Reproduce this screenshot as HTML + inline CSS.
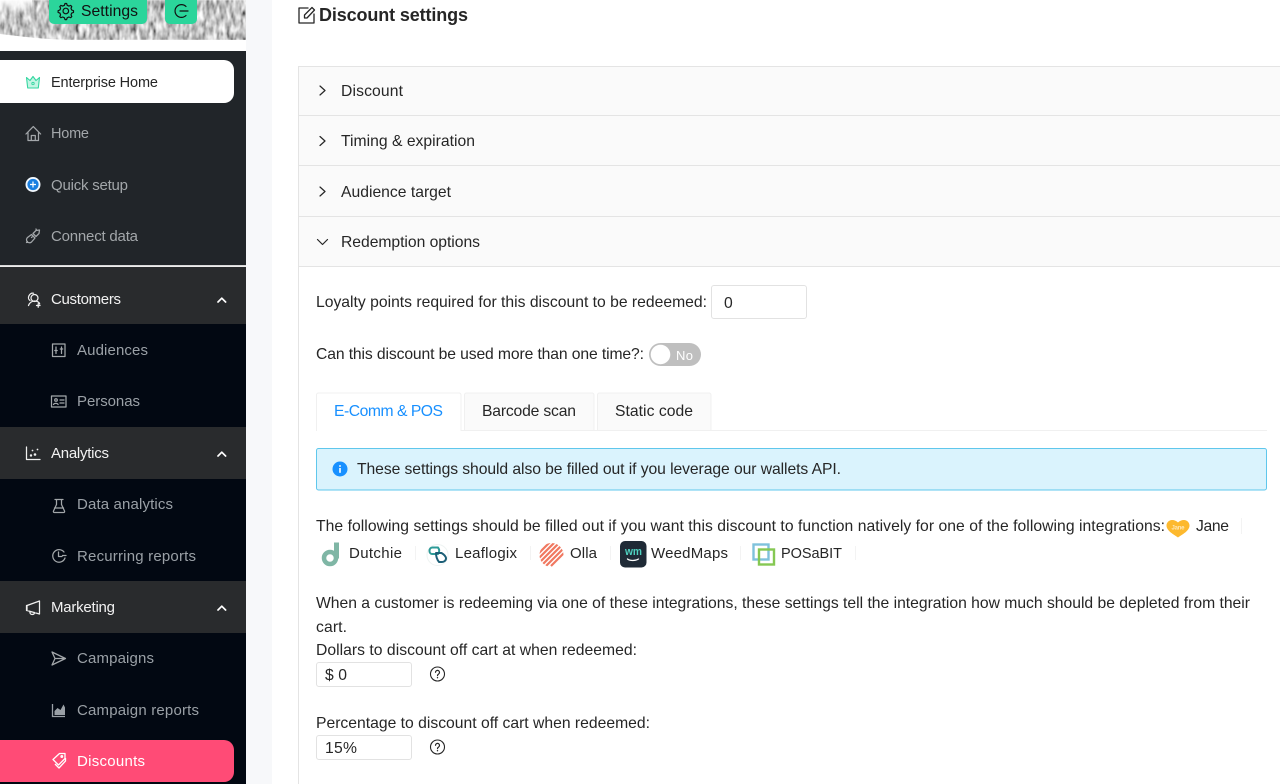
<!DOCTYPE html>
<html><head><meta charset="utf-8"><title>Discount settings</title>
<style>
html,body{margin:0;padding:0;background:#fff;width:1280px;height:784px;overflow:hidden}
svg{display:block}
text{font-family:"Liberation Sans",sans-serif;font-size:15.700px;fill:#262626}
.t{font-size:15px}
.n{font-size:15px}
.m{fill:#a3a7aa}.s{fill:#9aa0a6}.w{fill:#f2f2f2}
.i{fill:none;stroke:#a3a7aa;stroke-width:1.250;stroke-linecap:round;stroke-linejoin:round}
.iw{fill:none;stroke:#f0f0f0;stroke-width:1.250;stroke-linecap:round;stroke-linejoin:round}
.k{fill:none;stroke:#262626;stroke-width:1.200;stroke-linecap:round;stroke-linejoin:round}
</style></head><body>
<svg width="1280" height="784" viewBox="0 0 1280 784" xmlns="http://www.w3.org/2000/svg">
<defs>
<filter id="snow" x="0" y="0" width="100%" height="100%">
<feTurbulence type="fractalNoise" baseFrequency="0.3 0.09" numOctaves="3" seed="11"/>
<feColorMatrix type="matrix" values="1.150 1.150 0 0 -0.600  1.150 1.150 0 0 -0.600  1.150 1.150 0 0 -0.600  0 0 0 0 1"/>
<feGaussianBlur stdDeviation=".4"/>
</filter>
<linearGradient id="sky" x1="0" x2="0" y1="0" y2="1"><stop offset="0" stop-color="#fff" stop-opacity=".95"/><stop offset="1" stop-color="#fff" stop-opacity="0"/></linearGradient>
<clipPath id="ollaClip"><circle cx="551.500" cy="555" r="12"/></clipPath>
</defs>
<rect width="1280" height="784" fill="#fff"/>
<rect x="246" width="26" height="784" fill="#f7f8fa"/>

<!-- banner -->
<rect width="246" height="40" filter="url(#snow)"/>
<path d="M0 0H32V14H0Z" fill="url(#sky)"/>
<path d="M0 34C18 36 40 39 70 40H0Z" fill="#fff"/>
<rect y="40" width="246" height="10.500" fill="#fff"/>
<path d="M49 0H147V19a5 5 0 0 1-5 5H54a5 5 0 0 1-5-5Z" fill="#2bd59b"/>
<path d="M165 0H197V19a5 5 0 0 1-5 5H170a5 5 0 0 1-5-5Z" fill="#2bd59b"/>
<g fill="none" stroke="#111" stroke-width="1.200" stroke-linejoin="round">
<path d="M65 3.500l1.600 0 .6 1.800 1.700.8 1.800-.7 1.100 1.200-.8 1.700.7 1.700 1.800.7v1.700l-1.800.7-.7 1.700.8 1.700-1.100 1.200-1.800-.7-1.700.8-.6 1.800h-1.600l-.6-1.800-1.700-.8-1.800.7-1.100-1.200.8-1.700-.7-1.700-1.800-.7v-1.700l1.800-.7.7-1.700-.8-1.700 1.100-1.200 1.800.7 1.700-.8Z"/>
<circle cx="65.800" cy="11" r="2.800"/>
<path d="M186 6.500a6.400 6.400 0 1 0 0 9M180 11H188" stroke-linecap="round"/>
</g>
<text x="81" y="16" textLength="57" style="fill:#111">Settings</text>

<!-- sidebar -->
<rect y="51" width="246" height="215" fill="#212529"/>
<rect y="265" width="246" height="1.500" fill="#d8d8d8"/>
<rect y="267" width="246" height="517" fill="#020812"/>
<rect y="267" width="246" height="57" fill="#292b2d"/>
<rect y="427" width="246" height="52" fill="#292b2d"/>
<rect y="581" width="246" height="52" fill="#292b2d"/>

<path d="M0 60H224a10 10 0 0 1 10 10V93a10 10 0 0 1-10 10H0Z" fill="#fff"/>
<path d="M0 740H224a10 10 0 0 1 10 10V772a10 10 0 0 1-10 10H0Z" fill="#ff4b76"/>

<text x="51" y="87" textLength="107" style="font-size:14.500px">Enterprise Home</text>
<text class="t m" x="51" y="138" textLength="38" style="font-size:14.500px">Home</text>
<text class="t m" x="51" y="190" textLength="77">Quick setup</text>
<text class="t m" x="51" y="241" textLength="87">Connect data</text>
<text class="t w" x="51" y="304" textLength="70">Customers</text>
<text class="t s" x="77" y="355" textLength="71">Audiences</text>
<text class="t s" x="77" y="406" textLength="63">Personas</text>
<text class="t w" x="51" y="458" textLength="58">Analytics</text>
<text class="t s" x="77" y="509" textLength="96">Data analytics</text>
<text class="t s" x="77" y="561" textLength="119">Recurring reports</text>
<text class="t w" x="51" y="612" textLength="64">Marketing</text>
<text class="t s" x="77" y="663" textLength="77">Campaigns</text>
<text class="t s" x="77" y="715" textLength="122">Campaign reports</text>
<text class="t" x="77" y="766" textLength="68" style="fill:#fff">Discounts</text>

<!-- sidebar icons -->
<path d="M26.500 77.500l3.500 3 3-4 3 4 3.500-3-1.200 10.500h-10.600Z" fill="#c4f5e4" stroke="#33d6a0" stroke-width="1.100" stroke-linejoin="round"/>
<circle cx="33" cy="83.500" r="1.200" fill="none" stroke="#33d6a0" stroke-width=".9"/>
<path class="i" d="M26 134l7.300-7.500 7.300 7.500M28 132.500V140.500h10.500V132.500M31.300 140.500v-5h4v5"/>
<circle cx="33" cy="184.500" r="7.500" fill="#f2f8fd"/><circle cx="33" cy="184.500" r="5.600" fill="#1a7fe0"/>
<path d="M33 181.500v6M30 184.500h6" stroke="#fff" stroke-width="1.200"/>
<path class="i" d="M27.500 237.500l4-3 3.500 3.500-3.500 4a2.500 2.500 0 0 1-4-4.500ZM33 233.500l3-3 3.500-.5-.5 3.500-3 3ZM36.500 230.500l-.5-1.500M27.500 241.500l-1 1M33 236l-1.500 1.500"/>
<g class="iw"><circle cx="34.500" cy="298" r="3.500"/><path d="M28.500 305.500c.8-2.500 3.200-4.500 6-4.500s4.500 1 5.200 3M30 300.500c-1.500-1-2-3-1-4.800s2.500-3 4.500-2.500M36.500 305.500h3.500M38.200 303.800v3.500"/></g>
<g class="i"><rect x="52.500" y="344" width="12.500" height="12.500"/><path d="M56 347v6.500M61.500 347v6.500M54.800 350.500h2.400M60.300 349h2.400"/></g>
<g class="i"><rect x="51.500" y="396" width="14.500" height="11"/><circle cx="56" cy="400" r="1.300"/><path d="M53.500 404.500c.6-1.500 4-1.500 4.600 0M60 400h4M60 403h4"/></g>
<g class="iw"><path d="M26.500 447v12.500H40"/></g>
<g fill="#f0f0f0"><circle cx="31" cy="455.500" r="1.200"/><circle cx="35" cy="454.500" r="1.300"/><circle cx="32.500" cy="450.500" r=".9"/><circle cx="37.500" cy="449.500" r=".9"/></g>
<g class="i"><path d="M55 499.500h8M56.500 500v4.500l-3 6.500c-.3.700 0 1.500 1 1.500h9c1 0 1.300-.8 1-1.500l-3-6.500v-4.500M54.500 508h9"/></g>
<g class="i"><path d="M64 552a6.300 6.300 0 1 0 1 6M58.500 552v4.500h3.500M62.500 555.500h3.500"/></g>
<g class="iw"><path d="M39.500 601L27 605.500v5L39.500 614ZM27 605.500h-.500v5h.5M30 611.500c-.5 1.500.5 3 2 3s2.500-.8 2.500-2"/></g>
<path class="i" d="M52 652l13.500 6.500L52 665l3-6.500ZM55 658.500h10.500"/>
<path d="M52.500 704v12.500H65" fill="none" stroke="#9aa0a6" stroke-width="1.300"/><path d="M54.500 715v-4l3-3 3 2 3-5.500 1.500 3V715Z" fill="#9aa0a6"/>
<g fill="none" stroke="#fff" stroke-width="1.300" stroke-linejoin="round"><path d="M53 759.500l6.500-6h5.500v5l-6.500 6.500Z"/><path d="M65.500 758v3l-6.500 7-4-4"/><circle cx="61.800" cy="756.500" r=".8"/></g>
<g fill="none" stroke="#fff" stroke-width="1.700" stroke-linecap="round" stroke-linejoin="round"><path d="M218 302l3.800-3.800 3.800 3.800M218 456l3.800-3.800 3.800 3.800M218 610l3.800-3.800 3.800 3.800"/></g>

<!-- title -->
<g fill="none" stroke="#262626" stroke-width="1.300" stroke-linecap="round" stroke-linejoin="round"><path d="M308 8h-9v15h15v-9"/><path d="M304.500 18v-3l7.500-7.500 2.500 2.500-7.500 8Z"/></g>
<text x="319" y="21" textLength="149" style="font-size:18px;font-weight:700">Discount settings</text>

<!-- accordion -->
<rect x="299" y="67" width="981" height="200" fill="#fafafa"/>
<g fill="#e4e4e4"><rect x="298" y="66" width="982" height="1"/><rect x="298" y="115" width="982" height="1"/><rect x="298" y="165" width="982" height="1"/><rect x="298" y="216" width="982" height="1"/><rect x="298" y="266" width="982" height="1"/><rect x="298" y="66" width="1" height="718"/></g>
<path class="k" d="M320 86l5 4.500-5 4.500M320 136.500l5 4.500-5 4.500M320 187l5 4.500-5 4.500M317.500 239.500l5 5 5-5"/>
<text x="341" y="96" textLength="62">Discount</text>
<text x="341" y="146" textLength="134">Timing &amp; expiration</text>
<text x="341" y="197" textLength="110">Audience target</text>
<text x="341" y="247" textLength="139">Redemption options</text>

<!-- loyalty -->
<text x="316" y="307" textLength="391">Loyalty points required for this discount to be redeemed:</text>
<rect x="711.500" y="285.500" width="95" height="33" rx="2.500" fill="#fff" stroke="#e2e2e2"/>
<text x="724" y="308" textLength="9">0</text>

<text x="316" y="359" textLength="328">Can this discount be used more than one time?:</text>
<rect x="649" y="343" width="52" height="23" rx="11.500" fill="#bfbfbf"/>
<circle cx="660.500" cy="354.500" r="9.800" fill="#fff"/>
<text x="676" y="360" textLength="17" style="font-size:13px;fill:#fff">No</text>

<!-- tabs -->
<path d="M464.500 430V395a2 2 0 0 1 2-2H592a2 2 0 0 1 2 2V430" fill="#fafafa" stroke="#f0f0f0"/>
<path d="M597.500 430V395a2 2 0 0 1 2-2H709a2 2 0 0 1 2 2V430" fill="#fafafa" stroke="#f0f0f0"/>
<rect x="316" y="430" width="951" height="1" fill="#f0f0f0"/>
<path d="M316.500 431V395a2 2 0 0 1 2-2H459a2 2 0 0 1 2 2V431" fill="#fff" stroke="#f0f0f0"/>
<text x="334" y="416" textLength="109" style="fill:#1890ff">E-Comm &amp; POS</text>
<text x="482" y="416" textLength="94">Barcode scan</text>
<text x="615" y="416" textLength="78">Static code</text>

<!-- alert -->
<rect x="316.500" y="448.500" width="950" height="41.500" rx="2" fill="#daf3fd" stroke="#5fc7ec"/>
<circle cx="340" cy="469" r="7.500" fill="#1890ff"/>
<rect x="339.200" y="468" width="1.600" height="4.800" fill="#fff"/><rect x="339.200" y="465.200" width="1.600" height="1.600" fill="#fff"/>
<text x="357" y="474" textLength="484">These settings should also be filled out if you leverage our wallets API.</text>

<!-- integrations -->
<text x="316" y="531" textLength="849">The following settings should be filled out if you want this discount to function natively for one of the following integrations:</text>
<path d="M1178 537.500c-4-3-11.500-6.500-11.500-12 0-3 2.500-5.500 5.500-5.500 2.500 0 4.700 1 6 2.500 1.300-1.500 3.500-2.500 6-2.500 3 0 5.500 2.500 5.500 5.500 0 5.500-7.500 9-11.500 12Z" fill="#fdb92e"/>
<text x="1171.500" y="529.500" textLength="13" style="font-size:6px;font-weight:700;fill:#ffe9b8">Jane</text>
<text x="1196" y="531" textLength="33">Jane</text>
<rect x="1241" y="518" width="1" height="16" fill="#f3f3f3"/>

<path d="M336.500 542.500v16" stroke="#7fb6a5" stroke-width="5" fill="none"/>
<circle cx="330" cy="558" r="6" fill="none" stroke="#7fb6a5" stroke-width="4.500"/>
<text class="n" x="349" y="558" textLength="53">Dutchie</text>
<rect x="415" y="546" width="1" height="14" fill="#f3f3f3"/>
<circle cx="437.500" cy="555" r="10.500" fill="#fff" stroke="#eef3f2"/>
<g fill="none" stroke-width="2" stroke-linejoin="round"><path d="M429.500 551c0-2 1-3.500 3-3.500h5.500c1.500 2 1.500 4.500 0 6.500h-6c-1.500 0-2.500-1.500-2.500-3Z" stroke="#2d9a97"/><path d="M436 553h5.500c2.500 1.500 4.500 3.500 4.500 5.500s-2 3.500-4 3.500h-3c-2-2.500-3-6-3-9Z" stroke="#1c5f77"/></g>
<text class="n" x="455" y="558" textLength="62">Leaflogix</text>
<rect x="530" y="546" width="1" height="14" fill="#f3f3f3"/>
<g stroke="#f07860" stroke-width="2.200" clip-path="url(#ollaClip)"><path d="M535 552l18-18M535 557l22-22M535 562l26-26M537 565l26-26M541 566l24-24M546 566l20-20M551 566l18-18"/></g>
<text class="n" x="570" y="558" textLength="27">Olla</text>
<rect x="610" y="546" width="1" height="14" fill="#f3f3f3"/>
<rect x="620" y="541" width="26.500" height="26.500" rx="5" fill="#1f2a36"/>
<text x="625" y="555" textLength="17" lengthAdjust="spacingAndGlyphs" style="font-size:11px;font-weight:700;fill:#4fd2c0">wm</text>
<path d="M627.500 559c2.500 2 8 2 11 0" fill="none" stroke="#fff" stroke-width="1.300" stroke-linecap="round"/>
<text class="n" x="651" y="558" textLength="77">WeedMaps</text>
<rect x="740" y="546" width="1" height="14" fill="#f3f3f3"/>
<rect x="753.500" y="544.500" width="15" height="15" fill="none" stroke="#7fc2dc" stroke-width="2.400"/>
<rect x="759" y="549.500" width="15" height="15" fill="none" stroke="#85c853" stroke-width="2.400"/>
<text x="781" y="558" textLength="61" style="font-size:14.500px">POSaBIT</text>
<rect x="855" y="546" width="1" height="14" fill="#f3f3f3"/>

<text x="316" y="608" textLength="934">When a customer is redeeming via one of these integrations, these settings tell the integration how much should be depleted from their</text>
<text x="316" y="632" textLength="31">cart.</text>
<text x="316" y="655" textLength="321">Dollars to discount off cart at when redeemed:</text>
<rect x="316.500" y="662.500" width="95" height="24" rx="2.500" fill="#fff" stroke="#e2e2e2"/>
<text x="325" y="680" textLength="22">$ 0</text>
<circle cx="437.500" cy="674" r="7" fill="none" stroke="#262626" stroke-width="1.100"/>
<path class="k" d="M435.500 672.300a2 2 0 1 1 3 1.800c-.6.400-1 .8-1 1.500" stroke-width="1"/><circle cx="437.500" cy="677.700" r=".7" fill="#262626"/>
<text x="316" y="728" textLength="334">Percentage to discount off cart when redeemed:</text>
<rect x="316.500" y="735.500" width="95" height="24" rx="2.500" fill="#fff" stroke="#e2e2e2"/>
<text x="325" y="753" textLength="32">15%</text>
<circle cx="437.500" cy="747" r="7" fill="none" stroke="#262626" stroke-width="1.100"/>
<path class="k" d="M435.500 745.300a2 2 0 1 1 3 1.800c-.6.400-1 .8-1 1.500" stroke-width="1"/><circle cx="437.500" cy="750.700" r=".7" fill="#262626"/>
</svg>
</body></html>
